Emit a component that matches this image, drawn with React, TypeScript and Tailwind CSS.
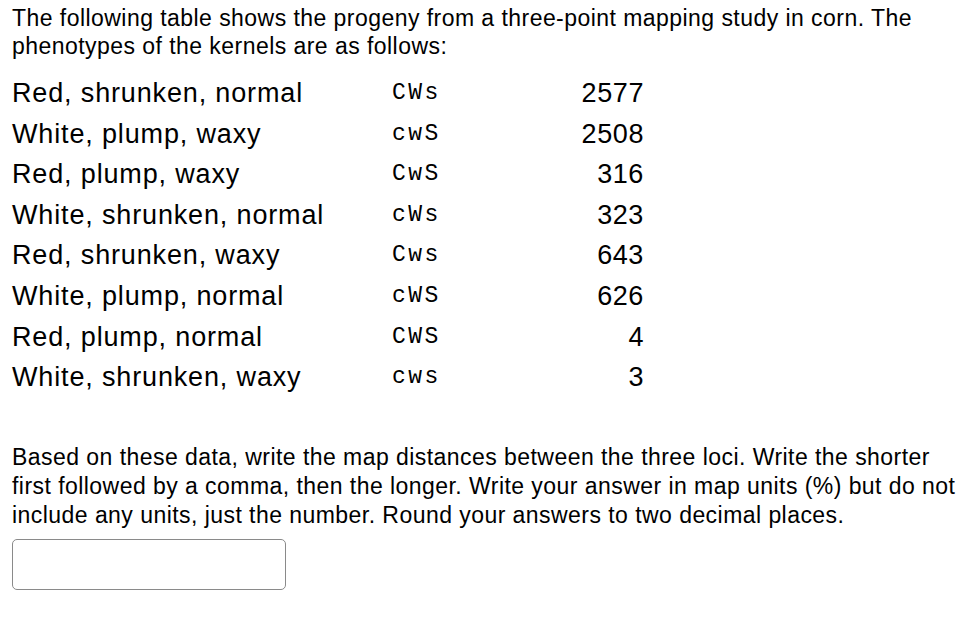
import React from 'react';

const rows: [string, string, string][] = [
  ['Red, shrunken, normal', 'CWs', '2577'],
  ['White, plump, waxy', 'cwS', '2508'],
  ['Red, plump, waxy', 'CwS', '316'],
  ['White, shrunken, normal', 'cWs', '323'],
  ['Red, shrunken, waxy', 'Cws', '643'],
  ['White, plump, normal', 'cWS', '626'],
  ['Red, plump, normal', 'CWS', '4'],
  ['White, shrunken, waxy', 'cws', '3'],
];

export default function App() {
  return (
    <div className="w-[971px] h-[618px] bg-white text-black font-['Liberation_Sans',Arial,sans-serif] px-3 pt-[4px]">
      <p className="text-[23px] leading-[28px] tracking-[0.45px]">
        The following table shows the progeny from a three-point mapping study in corn. The phenotypes of the kernels are as follows:
      </p>

      <div className="mt-[13px] flex flex-col">
        {rows.map(([pheno, geno, count]) => (
          <div key={geno} className="flex items-center h-[40.6px]">
            <span className="w-[380px] text-[27px] tracking-[0.85px]">{pheno}</span>
            <span className="w-[94px] font-['Liberation_Mono','Courier_New',monospace] text-[23px] tracking-[2.4px]">{geno}</span>
            <span className="w-[158px] text-right text-[27px] tracking-[0.6px]">{count}</span>
          </div>
        ))}
      </div>

      <p className="mt-[45px] text-[23px] leading-[29px] tracking-[0.45px]">
        Based on these data, write the map distances between the three loci. Write the shorter first followed by a comma, then the longer. Write your answer in map units (%) but do not include any units, just the number. Round your answers to two decimal places.
      </p>

      <input
        type="text"
        className="mt-[9px] block w-[274px] h-[51px] rounded-[5px] border border-[#8a8a8a] bg-white"
      />
    </div>
  );
}
